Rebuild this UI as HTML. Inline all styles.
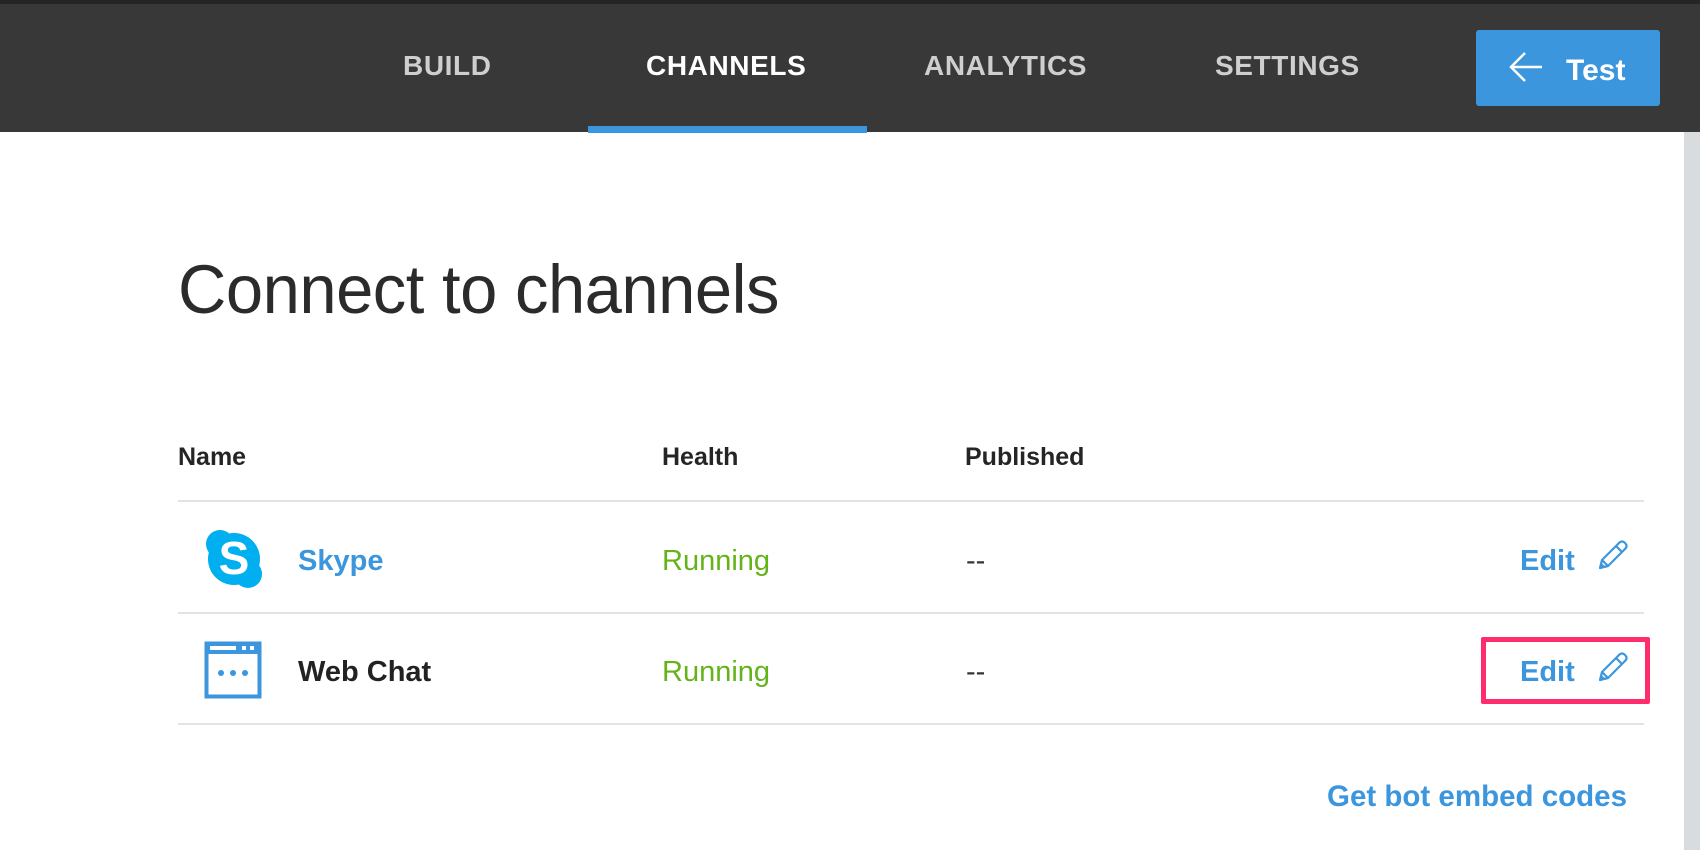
<!DOCTYPE html>
<html><head><meta charset="utf-8"><style>
*{margin:0;padding:0;box-sizing:border-box}
body{width:1700px;height:850px;overflow:hidden;background:#fff;font-family:"Liberation Sans",sans-serif;position:relative}
.top{position:absolute;left:0;top:0;width:1700px;height:132px;background:#383838;border-top:4px solid #242424}
.nav{position:absolute;font-weight:bold;font-size:28px;color:#cfcfcf;letter-spacing:0.6px;top:51px;line-height:30px}
.ul{position:absolute;left:588px;top:126px;width:279px;height:7px;background:#3b96dd}
.btn{position:absolute;left:1476px;top:30px;width:184px;height:76px;background:#3b96dd;border-radius:3px}
.btn span{position:absolute;left:90px;top:24px;color:#fff;font-weight:bold;font-size:30px}
.strip{position:absolute;left:1684px;top:132px;width:16px;height:718px;background:#d9dcdf}
.t{position:absolute;white-space:nowrap}
h1{position:absolute;left:178px;top:250px;font-weight:normal;font-size:69px;color:#2b2b2b;transform:scaleX(0.97);transform-origin:left top;line-height:80px;letter-spacing:-0.5px}
.hd{font-weight:bold;font-size:25px;color:#252525;top:443px}
.line{position:absolute;left:178px;width:1466px;height:2px;background:#e3e3e3}
.row{font-size:29px;top:545px}
.green{color:#64b31a}
.blue{color:#3b96dd;font-weight:bold}
.box{position:absolute;left:1481px;top:637px;width:169px;height:67px;border:5px solid #ff2d6b;border-radius:2px}
</style></head><body>
<div class="top"></div>
<div class="nav" style="left:403px">BUILD</div>
<div class="nav" style="left:646px;color:#fff">CHANNELS</div>
<div class="nav" style="left:924px">ANALYTICS</div>
<div class="nav" style="left:1215px">SETTINGS</div>
<div class="ul"></div>
<div class="btn">
<svg style="position:absolute;left:32px;top:22px" width="36" height="32" viewBox="0 0 36 32"><path d="M34 15H3M17 1L3 15L17 29" stroke="#fff" stroke-width="2.5" fill="none"/></svg>
<span>Test</span></div>
<div class="strip"></div>
<h1>Connect to channels</h1>
<div class="t hd" style="left:178px">Name</div>
<div class="t hd" style="left:662px">Health</div>
<div class="t hd" style="left:965px">Published</div>
<div class="line" style="top:500px"></div>
<div class="line" style="top:612px"></div>
<div class="line" style="top:723px"></div>
<svg style="position:absolute;left:204px;top:529px" width="60" height="60" viewBox="0 0 60 60">
<circle cx="16" cy="15" r="14" fill="#00aff0"/><circle cx="44" cy="45" r="14" fill="#00aff0"/><circle cx="30" cy="30" r="26" fill="#00aff0"/>
<text x="30" y="45" text-anchor="middle" font-family="Liberation Sans" font-weight="bold" font-size="46" fill="#fff">S</text></svg>
<div class="t row blue" style="left:298px">Skype</div>
<div class="t row green" style="left:662px">Running</div>
<div class="t row" style="left:966px;color:#333">--</div>
<div class="t row blue" style="left:1520px">Edit</div>
<svg style="position:absolute;left:204px;top:641px" width="58" height="58" viewBox="0 0 58 58">
<rect x="2.5" y="2.5" width="53" height="53" fill="none" stroke="#3b96dd" stroke-width="4"/>
<rect x="2" y="2" width="54" height="11" fill="#3b96dd"/>
<rect x="6" y="5" width="26" height="4" fill="#fff"/><rect x="38" y="5" width="4" height="4" fill="#fff"/><rect x="46" y="5" width="4" height="4" fill="#fff"/>
<circle cx="17" cy="32" r="3" fill="#3b96dd"/><circle cx="29" cy="32" r="3" fill="#3b96dd"/><circle cx="41" cy="32" r="3" fill="#3b96dd"/></svg>
<div class="t row" style="left:298px;top:656px;font-weight:bold;color:#222">Web Chat</div>
<div class="t row green" style="left:662px;top:656px">Running</div>
<div class="t row" style="left:966px;top:656px;color:#333">--</div>
<div class="t row blue" style="left:1520px;top:656px">Edit</div>
<svg style="position:absolute;left:1597px;top:539px" width="32" height="32" viewBox="0 0 32 32"><path d="M3 29L5 21L22 4Q25 1 28 4Q31 7 28 10L11 27ZM5 21L11 27M19 7L25 13M4 25L7 28" stroke="#3b96dd" stroke-width="2.2" fill="none" stroke-linejoin="round"/></svg>
<svg style="position:absolute;left:1597px;top:651px" width="32" height="32" viewBox="0 0 32 32"><path d="M3 29L5 21L22 4Q25 1 28 4Q31 7 28 10L11 27ZM5 21L11 27M19 7L25 13M4 25L7 28" stroke="#3b96dd" stroke-width="2.2" fill="none" stroke-linejoin="round"/></svg>
<div class="box"></div>
<div class="t blue" style="left:1327px;top:780px;font-size:29.5px">Get bot embed codes</div>
</body></html>
